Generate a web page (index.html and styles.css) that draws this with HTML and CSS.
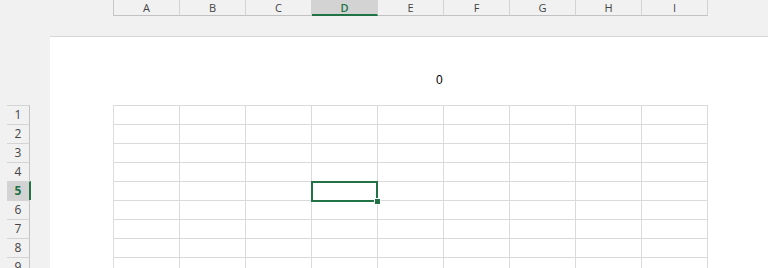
FILE: index.html
```html
<!DOCTYPE html>
<html>
<head>
<meta charset="utf-8">
<link rel="stylesheet" href="styles.css">
</head>
<body>
<div class="colbar">
  <div class="ch">A</div><div class="ch">B</div><div class="ch">C</div><div class="ch sel">D</div><div class="ch">E</div><div class="ch">F</div><div class="ch">G</div><div class="ch">H</div><div class="ch">I</div>
</div>
<div class="main">
  <div class="rowbar">
    <div class="rh">1</div><div class="rh">2</div><div class="rh">3</div><div class="rh">4</div><div class="rh sel">5</div><div class="rh">6</div><div class="rh">7</div><div class="rh">8</div><div class="rh">9</div>
  </div>
  <div class="page">
    <div class="title">0</div>
    <div class="grid">
      <div class="c"></div><div class="c"></div><div class="c"></div><div class="c"></div><div class="c"></div><div class="c"></div><div class="c"></div><div class="c"></div><div class="c"></div>
      <div class="c"></div><div class="c"></div><div class="c"></div><div class="c"></div><div class="c"></div><div class="c"></div><div class="c"></div><div class="c"></div><div class="c"></div>
      <div class="c"></div><div class="c"></div><div class="c"></div><div class="c"></div><div class="c"></div><div class="c"></div><div class="c"></div><div class="c"></div><div class="c"></div>
      <div class="c"></div><div class="c"></div><div class="c"></div><div class="c"></div><div class="c"></div><div class="c"></div><div class="c"></div><div class="c"></div><div class="c"></div>
      <div class="c"></div><div class="c"></div><div class="c"></div><div class="c"></div><div class="c"></div><div class="c"></div><div class="c"></div><div class="c"></div><div class="c"></div>
      <div class="c"></div><div class="c"></div><div class="c"></div><div class="c"></div><div class="c"></div><div class="c"></div><div class="c"></div><div class="c"></div><div class="c"></div>
      <div class="c"></div><div class="c"></div><div class="c"></div><div class="c"></div><div class="c"></div><div class="c"></div><div class="c"></div><div class="c"></div><div class="c"></div>
      <div class="c"></div><div class="c"></div><div class="c"></div><div class="c"></div><div class="c"></div><div class="c"></div><div class="c"></div><div class="c"></div><div class="c"></div>
      <div class="c"></div><div class="c"></div><div class="c"></div><div class="c"></div><div class="c"></div><div class="c"></div><div class="c"></div><div class="c"></div><div class="c"></div>
      <div class="cursor"><div class="handle"></div></div>
    </div>
  </div>
</div>
</body>
</html>
```
FILE: styles.css
```css
html, body {
  margin: 0;
  padding: 0;
  height: 100%;
  overflow: hidden;
}
body {
  background: #f1f1f1;
  font-family: "Open Sans", "Noto Sans", sans-serif;
  color: #444;
}
.colbar {
  display: flex;
  margin-left: 113px;
  height: 16px;
}
.ch {
  width: 65px;
  height: 15px;
  border-right: 1px solid #d4d4d4;
  border-bottom: 1px solid #c2c2c2;
  font-size: 11px;
  line-height: 15px;
  text-align: center;
  box-sizing: content-box;
}
.ch:first-child {
  border-left: 1px solid #c8c8c8;
}
.ch.sel {
  background: #d3d3d3;
  color: #217346;
  font-weight: 600;
  border-bottom: 2px solid #217346;
  height: 14px;
}
.main {
  display: flex;
  margin-top: 20px;
  height: 232px;
  overflow: hidden;
}
.rowbar {
  margin-left: 7px;
  margin-top: 69px;
  width: 23px;
  display: flex;
  flex-direction: column;
}
.rh {
  height: 18px;
  flex: none;
  border-top: 1px solid #d4d4d4;
  border-right: 1px solid #c2c2c2;
  font-size: 12px;
  line-height: 18px;
  text-align: center;
}
.rh.sel {
  background: #d3d3d3;
  color: #217346;
  font-weight: 700;
  border-right: 2px solid #217346;
  width: 22px;
}
.page {
  margin-left: 20px;
  flex: 1;
  background: #fff;
  border-top: 1px solid #d6d6d6;
  position: relative;
}
.title {
  font-family: "Liberation Sans", Arial, sans-serif;
  font-size: 12px;
  color: #000;
  height: 14px;
  line-height: 14px;
  margin-top: 36px;
  margin-left: 386px;
  width: 12px;
}
.grid {
  position: relative;
  margin-top: 18px;
  margin-left: 63px;
  display: grid;
  grid-template-columns: repeat(9, 66px);
  grid-auto-rows: 19px;
  width: 594px;
  border-left: 1px solid #dcdcdc;
  border-top: 1px solid #dadada;
}
.c {
  border-right: 1px solid #dadada;
  border-bottom: 1px solid #dadada;
}
.cursor {
  position: absolute;
  left: 197px;
  top: 75px;
  width: 63px;
  height: 17px;
  border: 2px solid #217346;
}
.handle {
  position: absolute;
  right: -5px;
  bottom: -5px;
  width: 5px;
  height: 5px;
  background: #217346;
  border: 1px solid #fff;
}
```
